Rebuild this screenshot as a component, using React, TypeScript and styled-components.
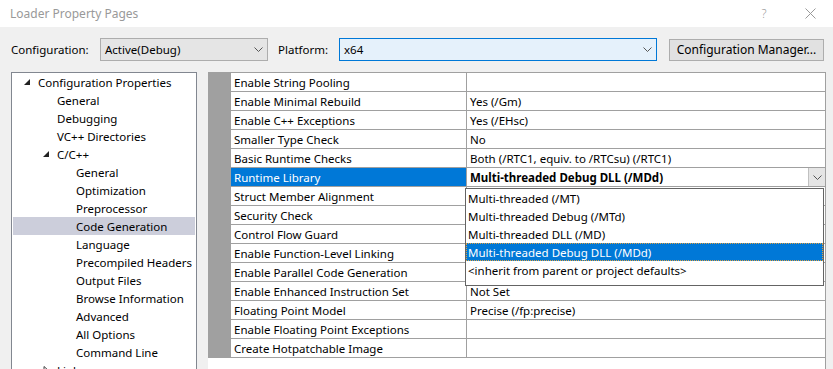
import React from "react";
import styled, { createGlobalStyle } from "styled-components";

const Global = createGlobalStyle`
  html, body { margin: 0; padding: 0; }
  body {
    width: 833px; height: 369px; overflow: hidden;
    font-family: "Noto Sans", "Open Sans", sans-serif;
    font-size: 11.5px; color: #000; background: #f0f0f0;
  }
  * { box-sizing: border-box; }
`;

const Window = styled.div`
  width: 833px; height: 369px; display: flex; flex-direction: column;
  background: #f0f0f0; overflow: hidden;
`;

const TitleBar = styled.div`
  height: 27px; flex: none; background: #fff; display: flex; align-items: center;
  padding-left: 10px; color: #999; font-size: 12px;
`;
const Title = styled.div` flex: 1; `;
const CaptionBtn = styled.div<{ $w: number }>`
  width: ${(p) => p.$w}px; height: 27px; display: flex; align-items: center; justify-content: center;
  color: #999; font-weight: 300;
`;

const Toolbar = styled.div`
  flex: none; height: 45px; display: flex; align-items: center; padding: 0 9px 0 11px;
`;
const Label = styled.span<{ $w: number; $gap?: number }>`
  width: ${(p) => p.$w}px; flex: none; margin-left: ${(p) => p.$gap ?? 0}px;
`;
const Combo = styled.div<{ $w: number; $focus?: boolean }>`
  width: ${(p) => p.$w}px; height: 23px; flex: none; display: flex; align-items: center;
  padding-left: 4px; border: 1px solid ${(p) => (p.$focus ? "#0078d7" : "#adadad")};
  background: ${(p) => (p.$focus ? "#e5f1fb" : "#e5e5e5")};
`;
const ComboText = styled.span` flex: 1; `;
const ComboArrow = styled.span` width: 18px; display: flex; justify-content: center; `;
const Button = styled.div`
  margin-left: auto; width: 155px; height: 22px; display: flex; align-items: center; justify-content: center;
  border: 1px solid #adadad; background: #e1e1e1; font-size: 12px;
`;

const Content = styled.div`
  flex: 1; display: flex; gap: 11px; padding-left: 11px; min-height: 0;
`;

const Tree = styled.div`
  width: 186px; flex: none; background: #fff; border: 1px solid #828790; border-bottom: none;
  height: 310px; overflow: hidden;
`;
const TreeRow = styled.div<{ $level: number; $sel?: boolean }>`
  height: 18px; display: flex; align-items: center;
  padding-left: ${(p) => 25 + p.$level * 19}px; margin: 0 1px;
  background: ${(p) => (p.$sel ? "#cccedb" : "transparent")};
  white-space: nowrap;
`;
const Twisty = styled.span`
  width: 14px; margin-left: -14px; display: flex; align-items: center;
`;

const GridPanel = styled.div`
  width: 618px; flex: none; background: #fff; position: relative;
  border-top: 1px solid #a0a0a0; border-right: 1px solid #a0a0a0; height: 310px;
`;
const Row = styled.div`
  display: grid; grid-template-columns: 22px 236px 1fr; height: 19px;
`;
const Gutter = styled.div` background: #a0a0a0; `;
const Cell = styled.div<{ $sel?: boolean; $bold?: boolean }>`
  border-bottom: 1px solid #a0a0a0; border-left: 1px solid #a0a0a0;
  padding-left: 3px; display: flex; align-items: center; white-space: nowrap; overflow: hidden;
  background: ${(p) => (p.$sel ? "#0078d7" : "#fff")};
  color: ${(p) => (p.$sel ? "#fff" : "#000")};
  font-weight: ${(p) => (p.$bold ? 700 : 400)};
  padding-right: ${(p) => (p.$bold ? 0 : 3)}px;
`;
const CellText = styled.span` flex: 1; `;
const CellDrop = styled.span`
  width: 17px; height: 18px; flex: none; background: #e5e5e5; border-left: 1px solid #c0c0c0;
  display: flex; align-items: center; justify-content: center;
`;

const DropList = styled.div`
  position: absolute; left: 257px; top: 115px; width: 359px; height: 98px;
  background: #fff; border: 1px solid #646464;
`;
const DropItem = styled.div<{ $sel?: boolean }>`
  height: 18px; display: flex; align-items: center; padding-left: 2px; white-space: nowrap;
  background: ${(p) => (p.$sel ? "#0078d7" : "#fff")};
  color: ${(p) => (p.$sel ? "#fff" : "#000")};
  outline: ${(p) => (p.$sel ? "1px dotted #e0a040" : "none")}; outline-offset: -1px;
`;

const Chevron = ({ color = "#555" }: { color?: string }) => (
  <svg width="9" height="5" viewBox="0 0 9 5">
    <polyline points="0.5,0.5 4.5,4.5 8.5,0.5" fill="none" stroke={color} strokeWidth="1" />
  </svg>
);

const Expanded = () => (
  <svg width="7" height="7" viewBox="0 0 7 7">
    <polygon points="6,0 6,6 0,6" fill="#222" />
  </svg>
);
const Collapsed = () => (
  <svg width="7" height="9" viewBox="0 0 7 9">
    <polygon points="1,0.5 5.5,4.5 1,8.5" fill="none" stroke="#444" />
  </svg>
);

type TreeItem = { label: string; level: number; exp?: "open" | "closed"; sel?: boolean };
const treeItems: TreeItem[] = [
  { label: "Configuration Properties", level: 0, exp: "open" },
  { label: "General", level: 1 },
  { label: "Debugging", level: 1 },
  { label: "VC++ Directories", level: 1 },
  { label: "C/C++", level: 1, exp: "open" },
  { label: "General", level: 2 },
  { label: "Optimization", level: 2 },
  { label: "Preprocessor", level: 2 },
  { label: "Code Generation", level: 2, sel: true },
  { label: "Language", level: 2 },
  { label: "Precompiled Headers", level: 2 },
  { label: "Output Files", level: 2 },
  { label: "Browse Information", level: 2 },
  { label: "Advanced", level: 2 },
  { label: "All Options", level: 2 },
  { label: "Command Line", level: 2 },
  { label: "Linker", level: 1, exp: "closed" },
];

const props: [string, string][] = [
  ["Enable String Pooling", ""],
  ["Enable Minimal Rebuild", "Yes (/Gm)"],
  ["Enable C++ Exceptions", "Yes (/EHsc)"],
  ["Smaller Type Check", "No"],
  ["Basic Runtime Checks", "Both (/RTC1, equiv. to /RTCsu) (/RTC1)"],
  ["Runtime Library", "Multi-threaded Debug DLL (/MDd)"],
  ["Struct Member Alignment", ""],
  ["Security Check", ""],
  ["Control Flow Guard", ""],
  ["Enable Function-Level Linking", ""],
  ["Enable Parallel Code Generation", ""],
  ["Enable Enhanced Instruction Set", "Not Set"],
  ["Floating Point Model", "Precise (/fp:precise)"],
  ["Enable Floating Point Exceptions", ""],
  ["Create Hotpatchable Image", ""],
];

const options = [
  "Multi-threaded (/MT)",
  "Multi-threaded Debug (/MTd)",
  "Multi-threaded DLL (/MD)",
  "Multi-threaded Debug DLL (/MDd)",
  "<inherit from parent or project defaults>",
];

export default function App() {
  return (
    <Window>
      <Global />
      <TitleBar>
        <Title>Loader Property Pages</Title>
        <CaptionBtn $w={46}>?</CaptionBtn>
        <CaptionBtn $w={46}>
          <svg width="11" height="11" viewBox="0 0 11 11">
            <path d="M0.5 0.5 L10.5 10.5 M10.5 0.5 L0.5 10.5" stroke="#999" strokeWidth="1" />
          </svg>
        </CaptionBtn>
      </TitleBar>
      <Toolbar>
        <Label $w={89}>Configuration:</Label>
        <Combo $w={168}>
          <ComboText>Active(Debug)</ComboText>
          <ComboArrow><Chevron /></ComboArrow>
        </Combo>
        <Label $w={61} $gap={10}>Platform:</Label>
        <Combo $w={318} $focus>
          <ComboText>x64</ComboText>
          <ComboArrow><Chevron /></ComboArrow>
        </Combo>
        <Button>Configuration Manager...</Button>
      </Toolbar>
      <Content>
        <Tree>
          {treeItems.map((t, i) => (
            <TreeRow key={i} $level={t.level} $sel={t.sel}>
              {t.exp && <Twisty>{t.exp === "open" ? <Expanded /> : <Collapsed />}</Twisty>}
              {t.label}
            </TreeRow>
          ))}
        </Tree>
        <GridPanel>
          {props.map(([name, value], i) => {
            const sel = name === "Runtime Library";
            return (
              <Row key={i}>
                <Gutter />
                <Cell $sel={sel}>{name}</Cell>
                <Cell $bold={sel}>
                  <CellText>{value}</CellText>
                  {sel && <CellDrop><Chevron /></CellDrop>}
                </Cell>
              </Row>
            );
          })}
          <DropList>
            {options.map((o, i) => (
              <DropItem key={i} $sel={i === 3}>{o}</DropItem>
            ))}
          </DropList>
        </GridPanel>
      </Content>
    </Window>
  );
}
